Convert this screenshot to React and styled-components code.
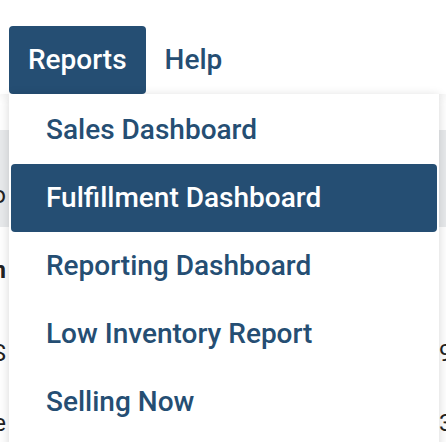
import React from "react";
import styled, { createGlobalStyle } from "styled-components";

const BLUE = "#254e73";

const GlobalStyle = createGlobalStyle`
  html, body { margin: 0; padding: 0; background: #fff; }
  body { font-family: Roboto, "Liberation Sans", Arial, sans-serif; overflow: hidden; }
`;

const Page = styled.div`
  position: relative;
  width: 446px;
  height: 442px;
  overflow: hidden;
`;

// top navigation bar
const Nav = styled.nav`
  position: relative;
  z-index: 2;
  display: flex;
  padding: 26px 9px 0;
  background: #fff;
  box-shadow: 0 3px 9px rgba(0, 0, 0, 0.07);
`;

const NavItem = styled.div`
  padding: 18px 19px;
  font-size: 28px;
  line-height: 32px;
  font-weight: 500;
  border-radius: 4px;
  color: ${(p) => (p.$active ? "#fff" : BLUE)};
  background: ${(p) => (p.$active ? BLUE : "transparent")};
`;

// dropdown menu under Reports
const Menu = styled.div`
  position: absolute;
  top: 100%;
  left: 9px;
  width: 430px;
  box-sizing: border-box;
  padding: 2px 2px 14px;
  background: #fff;
  box-shadow: 0 2px 10px rgba(0, 0, 0, 0.16);
`;

const MenuItem = styled.div`
  padding: 18px 35px;
  font-size: 28px;
  line-height: 32px;
  font-weight: 500;
  border-radius: 4px;
  color: ${(p) => (p.$active ? "#fff" : BLUE)};
  background: ${(p) => (p.$active ? BLUE : "transparent")};
`;

// page content hidden behind the menu
const Table = styled.div`
  margin: 36px 0 0 -60px;
  width: 566px;
  color: #222;
  font-size: 24px;
`;

const Row = styled.div`
  display: grid;
  grid-template-columns: 66px 433px 1fr;
  align-items: ${(p) => (p.$head ? "end" : "center")};
  height: ${(p) => p.$h}px;
  box-sizing: border-box;
  padding-bottom: ${(p) => (p.$head ? 18 : 0)}px;
  background: ${(p) => (p.$head ? "#e8eaec" : "transparent")};
  font-weight: ${(p) => (p.$bold ? 700 : 400)};
`;

const Cell = styled.div`
  text-align: ${(p) => p.$align || "left"};
  white-space: nowrap;
`;

const rows = [
  { h: 97, head: true, a: "Info", b: "" },
  { h: 86, bold: true, a: "Run", b: "" },
  { h: 80, a: "ItemS", b: "9.00" },
  { h: 60, a: "Price", b: "3.00" },
];

const items = [
  "Sales Dashboard",
  "Fulfillment Dashboard",
  "Reporting Dashboard",
  "Low Inventory Report",
  "Selling Now",
];

export default function App() {
  return (
    <Page>
      <GlobalStyle />
      <Nav>
        <NavItem $active>Reports</NavItem>
        <NavItem>Help</NavItem>
        <Menu>
          {items.map((t) => (
            <MenuItem key={t} $active={t === "Fulfillment Dashboard"}>
              {t}
            </MenuItem>
          ))}
        </Menu>
      </Nav>
      <Table>
        {rows.map((r, i) => (
          <Row key={i} $h={r.h} $head={r.head} $bold={r.bold}>
            <Cell $align="right">{r.a}</Cell>
            <Cell />
            <Cell>{r.b}</Cell>
          </Row>
        ))}
      </Table>
    </Page>
  );
}
